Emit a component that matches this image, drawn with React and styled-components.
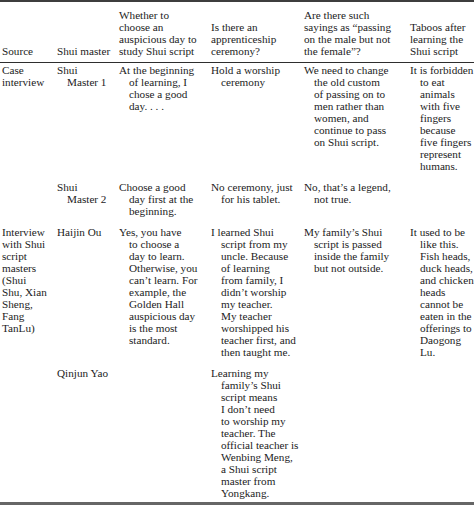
import React from "react";
import styled, { createGlobalStyle } from "styled-components";

const GlobalStyle = createGlobalStyle`
  html, body {
    margin: 0;
    padding: 0;
    background: #ffffff;
  }
  body {
    font-family: "Liberation Serif", "Times New Roman", serif;
    color: #1c1c1c;
  }
`;

const header = [
  ["Source"],
  ["Shui master"],
  ["Whether to", "choose an", "auspicious day to", "study Shui script"],
  ["Is there an", "apprenticeship", "ceremony?"],
  ["Are there such", "sayings as \u201cpassing", "on the male but not", "the female\u201d?"],
  ["Taboos after", "learning the", "Shui script"],
];

// each cell: [lines, hanging indent?]
const rows = [
  [
    [["Case", "interview"], false],
    [["Shui", "Master 1"], true],
    [["At the beginning", "of learning, I", "chose a good", "day. . . ."], true],
    [["Hold a worship", "ceremony"], true],
    [
      [
        "We need to change",
        "the old custom",
        "of passing on to",
        "men rather than",
        "women, and",
        "continue to pass",
        "on Shui script.",
      ],
      true,
    ],
    [
      [
        "It is forbidden",
        "to eat",
        "animals",
        "with five",
        "fingers",
        "because",
        "five fingers",
        "represent",
        "humans.",
      ],
      true,
    ],
  ],
  [
    [[], false],
    [["Shui", "Master 2"], true],
    [["Choose a good", "day first at the", "beginning."], true],
    [["No ceremony, just", "for his tablet."], true],
    [["No, that\u2019s a legend,", "not true."], true],
    [[], true],
  ],
  [
    [
      [
        "Interview",
        "with Shui",
        "script",
        "masters",
        "(Shui",
        "Shu, Xian",
        "Sheng,",
        "Fang",
        "TanLu)",
      ],
      false,
    ],
    [["Haijin Ou"], true],
    [
      [
        "Yes, you have",
        "to choose a",
        "day to learn.",
        "Otherwise, you",
        "can\u2019t learn. For",
        "example, the",
        "Golden Hall",
        "auspicious day",
        "is the most",
        "standard.",
      ],
      true,
    ],
    [
      [
        "I learned Shui",
        "script from my",
        "uncle. Because",
        "of learning",
        "from family, I",
        "didn\u2019t worship",
        "my teacher.",
        "My teacher",
        "worshipped his",
        "teacher first, and",
        "then taught me.",
      ],
      true,
    ],
    [
      ["My family\u2019s Shui", "script is passed", "inside the family", "but not outside."],
      true,
    ],
    [
      [
        "It used to be",
        "like this.",
        "Fish heads,",
        "duck heads,",
        "and chicken",
        "heads",
        "cannot be",
        "eaten in the",
        "offerings to",
        "Daogong",
        "Lu.",
      ],
      true,
    ],
  ],
  [
    [[], false],
    [["Qinjun Yao"], true],
    [[], true],
    [
      [
        "Learning my",
        "family\u2019s Shui",
        "script means",
        "I don\u2019t need",
        "to worship my",
        "teacher. The",
        "official teacher is",
        "Wenbing Meng,",
        "a Shui script",
        "master from",
        "Yongkang.",
      ],
      true,
    ],
    [[], true],
    [[], true],
  ],
];

const Table = styled.div`
  display: grid;
  grid-template-columns: 55px 62px 92px 93px 106px 1fr;
  width: 474px;
  box-sizing: border-box;
  padding-left: 2px;
  border-top: 2px solid #3d3d3d;
  border-bottom: 3px solid #666666;
  font-size: 11.2px;
  line-height: 12px;
  overflow: hidden;
`;

const HeaderCell = styled.div`
  display: flex;
  flex-direction: column;
  justify-content: flex-end;
  padding: 7px 0 5px;
  border-bottom: 1px solid #2e2e2e;
  margin-left: ${(p) => (p.$first ? "-2px" : "0")};
  padding-left: ${(p) => (p.$first ? "2px" : "0")};
`;

const Cell = styled.div`
  display: flex;
  flex-direction: column;
  padding-top: ${(p) => (p.$firstRow ? "1px" : "0")};
  padding-bottom: ${(p) => (p.$lastRow ? "3px" : "9px")};
`;

const Line = styled.span`
  display: block;
  white-space: nowrap;
  padding-left: ${(p) => (p.$indent ? "10px" : "0")};
`;

export default function App() {
  return (
    <>
      <GlobalStyle />
      <Table>
        {header.map((lines, i) => (
          <HeaderCell key={`h${i}`} $first={i === 0}>
            {lines.map((l) => (
              <Line key={l}>{l}</Line>
            ))}
          </HeaderCell>
        ))}
        {rows.map((row, r) =>
          row.map(([lines, hanging], c) => (
            <Cell
              key={`${r}-${c}`}
              $firstRow={r === 0}
              $lastRow={r === rows.length - 1}
            >
              {lines.map((l, k) => (
                <Line key={k} $indent={hanging && k > 0}>
                  {l}
                </Line>
              ))}
            </Cell>
          ))
        )}
      </Table>
    </>
  );
}
